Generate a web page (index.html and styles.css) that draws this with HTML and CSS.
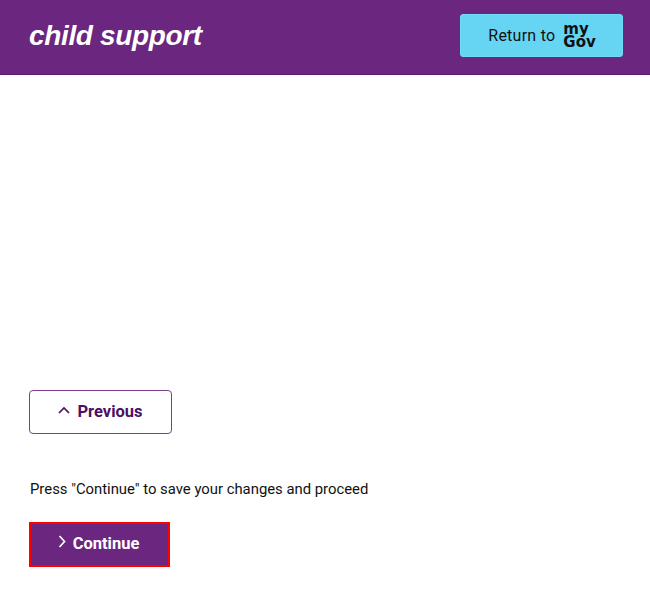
FILE: index.html
```html
<!DOCTYPE html>
<html lang="en">
<head>
<meta charset="utf-8">
<title>child support</title>
<link rel="stylesheet" href="styles.css">
</head>
<body>
<header class="site-header">
  <div class="brand">child support</div>
  <a class="return-btn" href="#">
    <span class="return-text">Return to</span>
    <span class="mygov">my Gov</span>
  </a>
</header>
<main class="content">
  <button class="btn-prev" type="button">
    <svg class="chev" width="12" height="8" viewBox="0 0 12 8"><path d="M1 7 L6 2 L11 7" fill="none" stroke="#4b0f66" stroke-width="1.7"/></svg>
    Previous
  </button>
  <p class="note">Press "Continue" to save your changes and proceed</p>
  <button class="btn-continue" type="button">
    <svg class="chev-r" width="8" height="13" viewBox="0 0 8 13"><path d="M1.5 1 L6.5 6.5 L1.5 12" fill="none" stroke="#fff" stroke-width="1.7"/></svg>
    Continue
  </button>
</main>
</body>
</html>
```
FILE: styles.css
```css
* { box-sizing: border-box; }
html, body { margin: 0; padding: 0; background: #fff; }
body { font-family: Roboto, "Liberation Sans", sans-serif; color: #111; height: 613px; overflow: hidden; }
.site-header {
  height: 75px;
  background: #6b267f;
  border-bottom: 1px solid #5a1a70;
  display: flex;
  align-items: center;
  justify-content: space-between;
  padding: 0 27px 3px 29px;
}
.brand {
  font-family: "Liberation Sans", Arial, sans-serif;
  font-style: italic;
  font-weight: 700;
  font-size: 28px;
  letter-spacing: -0.35px;
  color: #fff;
}
.return-btn {
  width: 163px;
  height: 43px;
  background: #66d5f3;
  border: 1px solid #6fdcf5;
  border-radius: 3px;
  display: flex;
  align-items: center;
  justify-content: center;
  gap: 8px;
  padding-left: 1px;
  color: #111;
  text-decoration: none;
}
.return-text { font-size: 16px; letter-spacing: 0.25px; }
.mygov {
  width: min-content;
  font-family: "DejaVu Sans", sans-serif;
  font-weight: 700;
  font-size: 15px;
  line-height: 13px;
  color: #111;
}
.content { padding: 315px 29px 0; }
.btn-prev {
  width: 143px;
  height: 44px;
  display: flex;
  align-items: center;
  justify-content: center;
  gap: 7px;
  padding: 0 0 2px;
  background: #fff;
  border: 1px solid #7d3f92;
  border-radius: 4px;
  color: #4b0f66;
  font: 700 16.5px Roboto, sans-serif;
}
.chev { margin-top: -2px; }
.note { margin: 46px 1px 0; font-size: 14.85px; line-height: 18px; color: #111; }
.btn-continue {
  margin-top: 24px;
  width: 141px;
  height: 45px;
  display: flex;
  align-items: center;
  justify-content: center;
  gap: 7px;
  padding: 0 2px 2px 0;
  background: #6b267f;
  border: 2px solid #ff0000;
  color: #fff;
  font: 700 16.5px Roboto, sans-serif;
}
.chev-r { margin-top: -4px; }
```
